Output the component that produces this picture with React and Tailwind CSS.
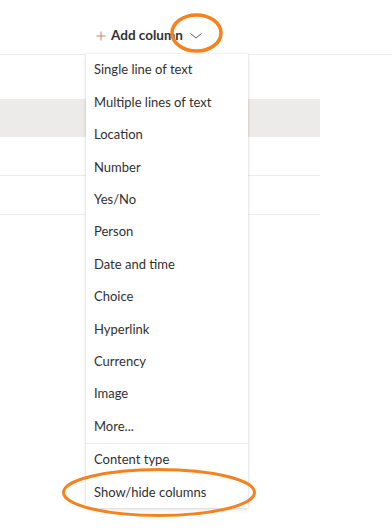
import React from "react";

const fieldTypes = [
    "Single line of text",
    "Multiple lines of text",
    "Location",
    "Number",
    "Yes/No",
    "Person",
    "Date and time",
    "Choice",
    "Hyperlink",
    "Currency",
    "Image",
    "More...",
];

const extraItems = ["Content type", "Show/hide columns"];

function MenuItem({ label }) {
    return (
        <div className="h-[32.4px] flex items-center pl-[8px] text-[13px] text-[#323130] hover:bg-[#f3f2f1] cursor-pointer">
            {label}
        </div>
    );
}

export default function App() {
    return (
        <div className="relative w-[392px] h-[528px] bg-white overflow-hidden" style={{ fontFamily: "Lato, 'Noto Sans', sans-serif" }}>
            {/* column header bar */}
            <div className="h-[55px] border-b border-[#edebe9] flex items-center pt-[16px] pl-[96px]">
                <button className="flex items-center gap-[5px] text-[13.5px] font-bold text-[#323130]">
                    <svg width="10" height="10" viewBox="0 0 10 10" className="mt-[1px]">
                        <path d="M5 0.5V9.5M0.5 5H9.5" stroke="#c9826d" strokeWidth="1" fill="none" />
                    </svg>
                    <span>Add column</span>
                    <svg width="12" height="6" viewBox="0 0 12 6" className="ml-[2px] mt-[2px]">
                        <path d="M0.5 0.5L6 5L11.5 0.5" stroke="#605e5c" strokeWidth="1" fill="none" />
                    </svg>
                </button>
            </div>

            {/* list rows behind the menu */}
            <div className="w-[320px]">
                <div className="h-[44px]" />
                <div className="h-[38px] bg-[#edebe9]" />
                <div className="h-[39px] border-b border-[#edebe9]" />
                <div className="h-[39px] border-b border-[#edebe9]" />
            </div>

            {/* dropdown */}
            <div className="absolute left-[86px] top-[54px] w-[162px] bg-white shadow-[0_0_2px_rgba(0,0,0,0.12),0_2px_4px_rgba(0,0,0,0.1)]">
                {fieldTypes.map((t) => (
                    <MenuItem key={t} label={t} />
                ))}
                <div className="h-[1px] bg-[#edebe9]" />
                {extraItems.map((t) => (
                    <MenuItem key={t} label={t} />
                ))}
            </div>

            {/* annotation circles */}
            <svg className="absolute left-0 top-0 pointer-events-none" width="392" height="528">
                <ellipse cx="196.5" cy="33" rx="24.5" ry="18" fill="none" stroke="#f5821f" strokeWidth="3.5" />
                <ellipse cx="159" cy="492.5" rx="95.5" ry="23" fill="none" stroke="#f5821f" strokeWidth="3" />
            </svg>
        </div>
    );
}
